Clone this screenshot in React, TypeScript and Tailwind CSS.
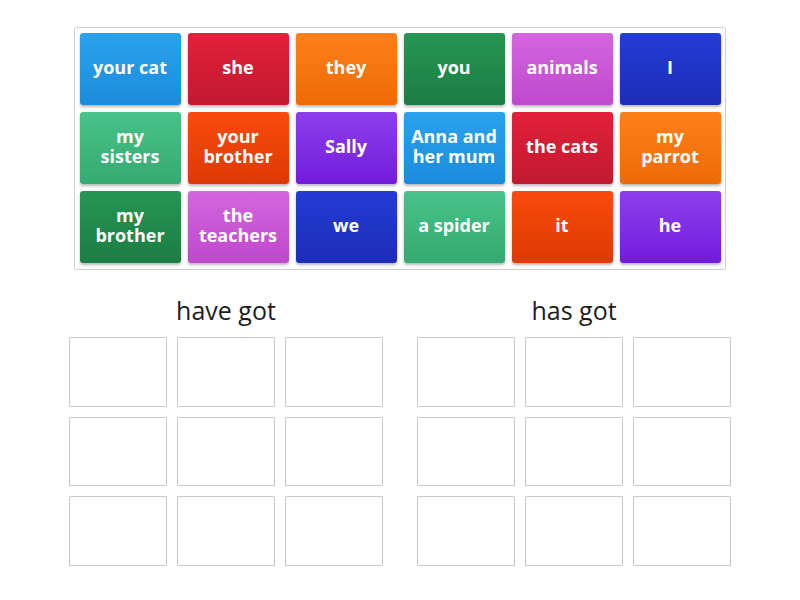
import React from "react";

const C: Record<string, string> = {
  blue: "bg-linear-to-b from-[#2aa2ee] to-[#1b8cdb]",
  red: "bg-linear-to-b from-[#e2213a] to-[#c1192f]",
  orange: "bg-linear-to-b from-[#ff8019] to-[#ec6b07]",
  green: "bg-linear-to-b from-[#269654] to-[#1c7d43]",
  pink: "bg-linear-to-b from-[#d366de] to-[#bf48cc]",
  dblue: "bg-linear-to-b from-[#243bd4] to-[#1c2db7]",
  teal: "bg-linear-to-b from-[#48c38b] to-[#35a971]",
  ored: "bg-linear-to-b from-[#fa4b0d] to-[#dc3a04]",
  purple: "bg-linear-to-b from-[#8e3cec] to-[#731adb]",
};

const tiles: { t: string[]; c: string }[] = [
  { t: ["your cat"], c: C.blue },
  { t: ["she"], c: C.red },
  { t: ["they"], c: C.orange },
  { t: ["you"], c: C.green },
  { t: ["animals"], c: C.pink },
  { t: ["I"], c: C.dblue },
  { t: ["my", "sisters"], c: C.teal },
  { t: ["your", "brother"], c: C.ored },
  { t: ["Sally"], c: C.purple },
  { t: ["Anna and", "her mum"], c: C.blue },
  { t: ["the cats"], c: C.red },
  { t: ["my", "parrot"], c: C.orange },
  { t: ["my", "brother"], c: C.green },
  { t: ["the", "teachers"], c: C.pink },
  { t: ["we"], c: C.dblue },
  { t: ["a spider"], c: C.teal },
  { t: ["it"], c: C.ored },
  { t: ["he"], c: C.purple },
];

function Group({ title }: { title: string }) {
  return (
    <div className="flex flex-col items-center w-[314px]">
      <div className="text-[25px] leading-[32px] text-[#1e1e1e] h-[32px]">{title}</div>
      <div className="mt-[11px] grid grid-cols-[repeat(3,98px)] gap-x-[10px] gap-y-[10px]">
        {Array.from({ length: 9 }).map((_, i) => (
          <div key={i} className="h-[69.5px] border border-[#c9c9c9] rounded-[1px] bg-white" />
        ))}
      </div>
    </div>
  );
}

export default function App() {
  return (
    <div className="w-[800px] h-[600px] bg-white overflow-hidden" style={{ fontFamily: '"Open Sans", "Noto Sans", sans-serif' }}>
      <div className="mx-auto mt-[27px] w-[652px] h-[243px] border border-[#cfcfcf] rounded-[3px] flex items-center justify-center">
        <div className="grid grid-cols-[repeat(6,101px)] auto-rows-[71.5px] gap-x-[7px] gap-y-[7.5px] -mt-[1px]">
          {tiles.map((x, i) => (
            <div
              key={i}
              className={`${x.c} rounded-[3px] shadow-[0_2px_3px_rgba(0,0,0,0.28)] flex items-center justify-center pb-[4px] text-white font-bold text-[18px] leading-[20px] text-center`}
            >
              <span className="whitespace-nowrap">
                {x.t.map((l, j) => (
                  <React.Fragment key={j}>
                    {j > 0 && <br />}
                    {l}
                  </React.Fragment>
                ))}
              </span>
            </div>
          ))}
        </div>
      </div>
      <div className="mt-[24px] flex justify-center gap-[34px]">
        <Group title="have got" />
        <Group title="has got" />
      </div>
    </div>
  );
}
